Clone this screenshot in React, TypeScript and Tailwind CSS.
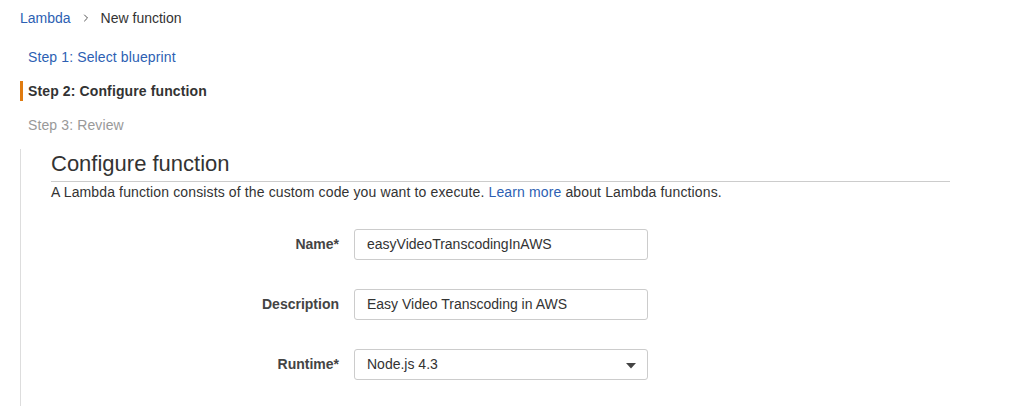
import { ChevronRight } from 'lucide-react';

const font = { fontFamily: '"Liberation Sans", Arial, sans-serif' };

function Field({ label, value, select }: { label: string; value: string; select?: boolean }) {
  return (
    <div className="flex items-center">
      <div className="w-[303px] pr-[15px] text-right text-[14px] font-bold text-[#444]">{label}</div>
      <div className="relative flex h-[31px] w-[294px] items-center rounded-[3px] border border-[#ccc] bg-white px-[12px] text-[14px] text-[#333]">
        {value}
        {select && (
          <svg className="absolute right-[11px] top-[13px]" width="10" height="6" viewBox="0 0 10 6">
            <path d="M0 0h10L5 5.5z" fill="#444" />
          </svg>
        )}
      </div>
    </div>
  );
}

export default function App() {
  return (
    <div className="h-[406px] w-[1024px] overflow-hidden bg-white" style={font}>
      <div className="flex items-center pl-[20px] pt-[10px] text-[14px] leading-[16px]">
        <span className="text-[#2d5fb3]">Lambda</span>
        <ChevronRight className="mx-[9px] h-[12px] w-[12px] text-[#555]" strokeWidth={2} />
        <span className="text-[#333]">New function</span>
      </div>

      <div className="mt-[21px] flex flex-col gap-[14px] text-[14px] leading-[20px] tracking-[0.12px]">
        <div className="pl-[28px] text-[#2d5fb3]">Step 1: Select blueprint</div>
        <div className="border-l-[3px] border-[#e07b0f] ml-[20px] pl-[5px] font-bold text-[#333]">Step 2: Configure function</div>
        <div className="pl-[28px] text-[#999]">Step 3: Review</div>
      </div>

      <div className="ml-[20px] mt-[14px] h-[300px] border-l border-[#ddd] pl-[30px]">
        <div className="w-[899px] border-b border-[#ccc] pb-[5px] pt-[2px] text-[22px] leading-[25px] text-[#333]">Configure function</div>
        <div className="pt-[1px] text-[14px] leading-[18px] tracking-[0.13px] text-[#333]">
          A Lambda function consists of the custom code you want to execute.{' '}
          <span className="text-[#2d5fb3]">Learn more</span> about Lambda functions.
        </div>
        <div className="mt-[28px] flex flex-col gap-[29px]">
          <Field label="Name*" value="easyVideoTranscodingInAWS" />
          <Field label="Description" value="Easy Video Transcoding in AWS" />
          <Field label="Runtime*" value="Node.js 4.3" select />
        </div>
      </div>
    </div>
  );
}
